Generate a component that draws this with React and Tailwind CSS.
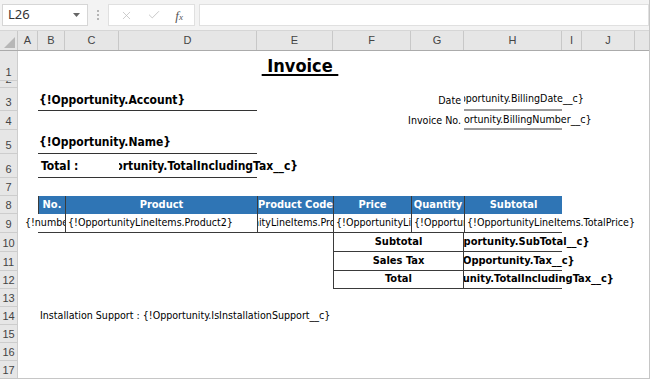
import { X, Check } from "lucide-react";

const COLS = [
  { l: "A", w: "w-[20px]" },
  { l: "B", w: "w-[27px]" },
  { l: "C", w: "w-[54px]" },
  { l: "D", w: "w-[138px]" },
  { l: "E", w: "w-[76px]" },
  { l: "F", w: "w-[78px]" },
  { l: "G", w: "w-[53px]" },
  { l: "H", w: "w-[98px]" },
  { l: "I", w: "w-[20px]" },
  { l: "J", w: "w-[53px]" },
];

function Toolbar() {
  return (
    <div className="h-[31px] bg-[#f3f3f3] border-b border-[#d6d6d6] flex items-center">
      <div className="ml-[2px] w-[86px] h-[22px] bg-white border border-[#d6d6d6] flex items-center justify-between pl-[5px] pr-[7px] text-[13px] text-[#333] font-['Noto_Sans',sans-serif]">
        <span>L26</span>
        <svg width="7" height="4" viewBox="0 0 7 4">
          <polygon points="0,0 7,0 3.5,4" fill="#666" />
        </svg>
      </div>
      <div className="w-[20px] flex flex-col items-center gap-[2px]">
        <span className="w-[2px] h-[2px] bg-[#b5b5b5]" />
        <span className="w-[2px] h-[2px] bg-[#b5b5b5]" />
        <span className="w-[2px] h-[2px] bg-[#b5b5b5]" />
      </div>
      <div className="w-[87px] h-[22px] bg-white border border-[#e0e0e0] flex items-center justify-around px-[4px]">
        <X size={13} strokeWidth={1.4} color="#bdbdbd" />
        <Check size={14} strokeWidth={1.4} color="#bdbdbd" />
        <span className="italic font-['Liberation_Serif',serif] text-[13px] text-[#555] leading-none">
          f<span className="text-[9px]">x</span>
        </span>
      </div>
      <div className="ml-[4px] flex-1 h-[22px] bg-white border border-[#e0e0e0]" />
    </div>
  );
}

function ColHeaders() {
  return (
    <div className="h-[20px] flex bg-[#e6e6e6] border-b border-[#ababab] text-[11px] text-[#444] font-['Liberation_Sans',sans-serif]">
      <div className="w-[18px] shrink-0 border-r border-[#c8c8c8] flex items-end justify-end pr-[2px] pb-[2px]">
        <svg width="11" height="11" viewBox="0 0 11 11">
          <polygon points="11,0 11,11 0,11" fill="#b7b7b7" />
        </svg>
      </div>
      {COLS.map((c) => (
        <div
          key={c.l}
          className={`${c.w} shrink-0 border-r border-[#c8c8c8] flex items-center justify-center`}>
          {c.l}
        </div>
      ))}
      <div className="flex-1" />
    </div>
  );
}

function Row({ n, h, children }) {
  return (
    <div className={`flex ${h}`}>
      <div className="w-[18px] shrink-0 bg-[#e6e6e6] border-r border-b border-[#cdcdcd] flex items-end justify-center overflow-hidden pb-[1px] text-[11px] leading-[14px] text-[#444] font-['Liberation_Sans',sans-serif]">
        {n}
      </div>
      <div className="flex flex-1 min-w-0 overflow-hidden bg-white">{children}</div>
    </div>
  );
}

// centered text clipped by the left neighbour, free to run right
function SpillRight({ w, className = "", text }) {
  return (
    <div className="flex-1 min-w-0 overflow-hidden flex">
      <div className={`${w} shrink-0 flex justify-center whitespace-nowrap ${className}`}>
        <span>{text}</span>
      </div>
    </div>
  );
}

export default function App() {
  const tableBorder = "border-[#3a3a3a]";

  return (
    <div className="w-[650px] h-[379px] overflow-hidden bg-white border-r border-b border-[#c6c6c6]">
      <Toolbar />
      <ColHeaders />
      <div className="font-['DejaVu_Sans_Condensed','DejaVu_Sans',sans-serif] text-[10.6px] text-black">
        <Row n="1" h="h-[30px]">
          <div className="w-[20px] shrink-0" />
          <div className="w-[524px] shrink-0 flex items-end justify-center pb-[4px]">
            <span className="text-[18px] leading-[22px] font-bold underline underline-offset-[2px] decoration-[1.5px] whitespace-pre">
              {"\u00a0Invoice\u00a0"}
            </span>
          </div>
        </Row>
        <Row n="2" h="h-[7px]" />
        <Row n="3" h="h-[23px]">
          <div className="w-[20px] shrink-0" />
          <div className="w-[219px] shrink-0 border-b border-[#333] flex items-end pb-[1px] pl-[1px] font-bold text-[12px] whitespace-nowrap">
            {"{!Opportunity.Account}"}
          </div>
          <div className="w-[154px] shrink-0" />
          <div className="w-[53px] shrink-0 flex items-end justify-end pr-[3px] pb-[2px] whitespace-nowrap">
            Date
          </div>
          <SpillRight
            w="w-[98px]"
            className="items-end pb-[2px] border-b-2 border-[#9a9a9a]"
            text="{!Opportunity.BillingDate__c}"
          />
        </Row>
        <Row n="4" h="h-[19px]">
          <div className="w-[393px] shrink-0" />
          <div className="w-[53px] shrink-0 flex items-center justify-end pr-[3px] whitespace-nowrap">
            Invoice No.
          </div>
          <SpillRight
            w="w-[98px]"
            className="items-center border-b-2 border-[#9a9a9a]"
            text="{!Opportunity.BillingNumber__c}"
          />
        </Row>
        <Row n="5" h="h-[24px]">
          <div className="w-[20px] shrink-0" />
          <div className="w-[219px] shrink-0 border-b border-[#333] flex items-center pl-[1px] font-bold text-[12px] whitespace-nowrap">
            {"{!Opportunity.Name}"}
          </div>
        </Row>
        <Row n="6" h="h-[24px]">
          <div className="w-[20px] shrink-0" />
          <div className="w-[81px] shrink-0 border-b border-[#333] flex items-center pl-[3px] font-bold text-[12px] whitespace-nowrap">
            Total :
          </div>
          <SpillRight
            w="w-[138px]"
            className="items-center border-b border-[#333] font-bold text-[12px]"
            text="{!Opportunity.TotalIncludingTax__c}"
          />
        </Row>
        <Row n="7" h="h-[18px]" />
        <Row n="8" h="h-[18px]">
          <div className="w-[20px] shrink-0" />
          <div className="flex bg-[#2f75b5] text-white font-bold text-[11px]">
            <div className={`w-[27px] border-l ${tableBorder} flex items-center justify-center`}>No.</div>
            <div className={`w-[192px] border-l ${tableBorder} flex items-center justify-center`}>Product</div>
            <div className={`w-[76px] border-l ${tableBorder} flex items-center justify-center whitespace-nowrap overflow-hidden`}>
              Product Code
            </div>
            <div className={`w-[78px] border-l ${tableBorder} flex items-center justify-center`}>Price</div>
            <div className={`w-[53px] border-l ${tableBorder} flex items-center justify-center`}>Quantity</div>
            <div className={`w-[98px] border-l ${tableBorder} flex items-center justify-center`}>Subtotal</div>
          </div>
        </Row>
        <Row n="9" h="h-[19px]">
          <div className="w-[47px] shrink-0 overflow-hidden flex">
            <div className="w-[20px] shrink-0" />
            <div className={`w-[27px] shrink-0 border-b ${tableBorder} flex items-center justify-center whitespace-nowrap`}>
              <span>{"{!number}"}</span>
            </div>
          </div>
          <div className={`w-[192px] shrink-0 border-l border-b ${tableBorder} flex items-center pl-[2px] whitespace-nowrap overflow-hidden`}>
            {"{!OpportunityLineItems.Product2}"}
          </div>
          <div className={`w-[76px] shrink-0 border-l border-b ${tableBorder} flex items-center justify-center whitespace-nowrap overflow-hidden`}>
            <span>{"{!OpportunityLineItems.ProductCode}"}</span>
          </div>
          <div className={`w-[78px] shrink-0 border-l border-b ${tableBorder} flex items-center pl-[2px] whitespace-nowrap overflow-hidden`}>
            {"{!OpportunityLineItems.UnitPrice}"}
          </div>
          <div className={`w-[53px] shrink-0 border-l border-b ${tableBorder} flex items-center pl-[2px] whitespace-nowrap overflow-hidden`}>
            {"{!OpportunityLineItems.Quantity}"}
          </div>
          <div className={`w-[98px] shrink-0 border-l border-b ${tableBorder} flex items-center pl-[2px] whitespace-nowrap`}>
            {"{!OpportunityLineItems.TotalPrice}"}
          </div>
        </Row>
        {[
          ["10", "h-[19px]", "Subtotal", "{!Opportunity.SubTotal__c}"],
          ["11", "h-[19px]", "Sales Tax", "{!Opportunity.Tax__c}"],
          ["12", "h-[18px]", "Total", "{!Opportunity.TotalIncludingTax__c}"],
        ].map(([n, h, label, value]) => (
          <Row key={n} n={n} h={h}>
            <div className="w-[315px] shrink-0" />
            <div className={`w-[131px] shrink-0 border-l border-r border-b ${tableBorder} flex items-center justify-center font-bold text-[11px]`}>
              {label}
            </div>
            <SpillRight
              w="w-[98px]"
              className={`items-center border-b ${tableBorder} font-bold text-[11px]`}
              text={value}
            />
          </Row>
        ))}
        <Row n="13" h="h-[18px]" />
        <Row n="14" h="h-[18px]">
          <div className="w-[20px] shrink-0" />
          <div className="flex-1 flex items-center pl-[2px] whitespace-nowrap">
            {"Installation Support : {!Opportunity.IsInstallationSupport__c}"}
          </div>
        </Row>
        <Row n="15" h="h-[18px]" />
        <Row n="16" h="h-[18px]" />
        <Row n="17" h="h-[18px]" />
      </div>
    </div>
  );
}
